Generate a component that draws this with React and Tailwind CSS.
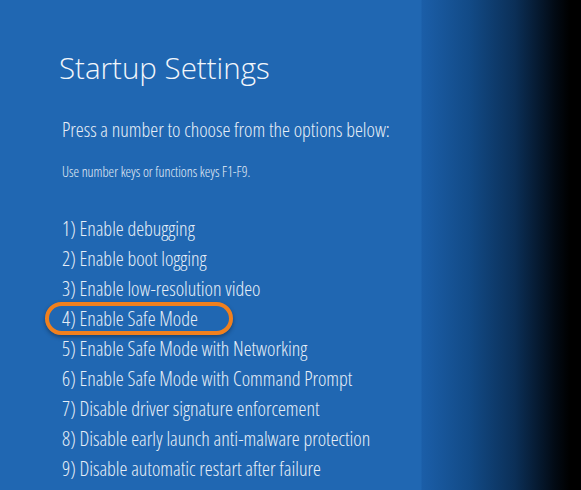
const options = [
  'Enable debugging',
  'Enable boot logging',
  'Enable low-resolution video',
  'Enable Safe Mode',
  'Enable Safe Mode with Networking',
  'Enable Safe Mode with Command Prompt',
  'Disable driver signature enforcement',
  'Disable early launch anti-malware protection',
  'Disable automatic restart after failure',
];

export default function App() {
  return (
    <main className="w-[581px] h-[490px] overflow-hidden bg-[linear-gradient(to_right,#2067b2_0px,#2067b2_421px,#1b5ea8_422px,#124a86_470px,#0b2f57_515px,#020a14_555px,#000_570px)] text-white font-['Open_Sans',sans-serif]">
      <div className="pl-[59px] pt-[48px]">
        <h1 className="text-[29.5px] font-light leading-[40px] text-[#f2f6fb]">Startup Settings</h1>
        <p className="mt-[30px] ml-[3px] text-[20px] font-light leading-[24px] font-stretch-condensed text-[#e6eef7]">
          Press a number to choose from the options below:
        </p>
        <p className="mt-[22px] ml-[3px] text-[14px] font-light leading-[16px] font-stretch-condensed text-[#e6eef7]">
          Use number keys or functions keys F1-F9.
        </p>
        <ul className="mt-[34px] ml-[3px] flex flex-col">
          {options.map((label, i) => (
            <li key={i} className="relative h-[30px] text-[20px] font-light leading-[30px] font-stretch-condensed text-[#e6eef7] whitespace-nowrap">
              {i + 1}) {label}
              {i === 3 && (
                <span className="absolute left-[-17px] top-[-2px] w-[188px] h-[33px] rounded-full border-[4px] border-[#f0801e] shadow-[0_2px_4px_rgba(0,0,0,0.35)]" />
              )}
            </li>
          ))}
        </ul>
      </div>
    </main>
  );
}
